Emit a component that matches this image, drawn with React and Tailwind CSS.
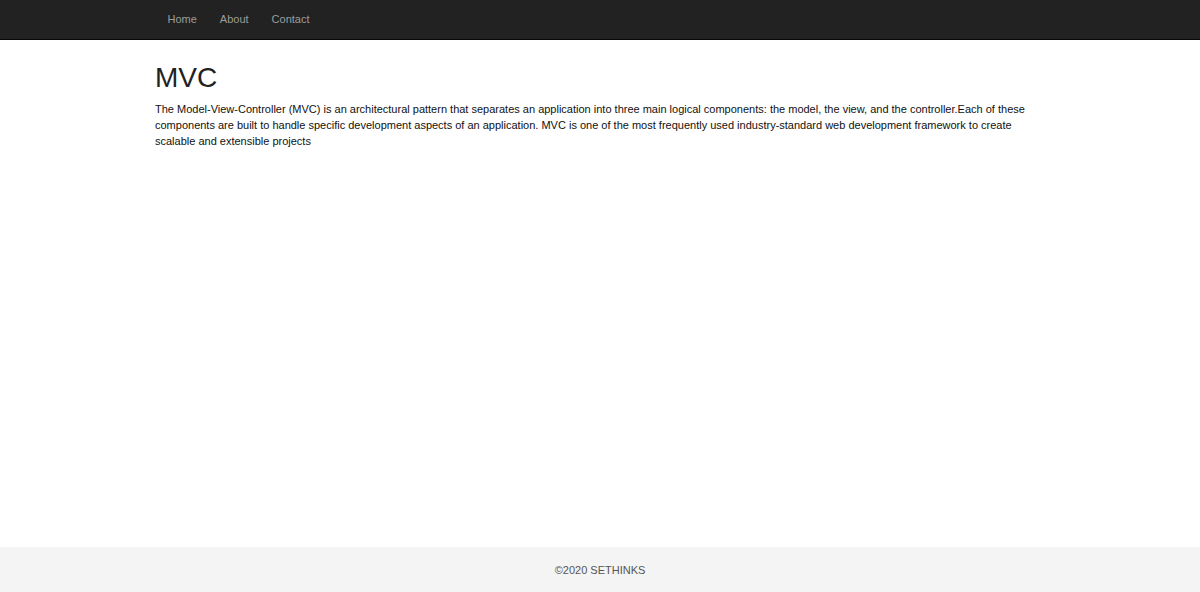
export default function App() {
  return (
    <div className="min-h-[592px] flex flex-col bg-white font-['Liberation_Sans',Arial,sans-serif]">
      {/* Navbar */}
      <nav className="h-10 bg-[#222222] border-b border-[#080808]">
        <ul className="w-[890px] mx-auto pl-px flex text-[11px] text-[#9d9d9d] leading-[39px]">
          <li className="px-[11.5px]">Home</li>
          <li className="px-[11.5px]">About</li>
          <li className="px-[11.5px]">Contact</li>
        </ul>
      </nav>

      {/* Content */}
      <main className="flex-1 w-[890px] mx-auto">
        <h1 className="mt-[22px] text-[28px] leading-8 text-[#222]">MVC</h1>
        <p className="mt-[7px] text-[11px] leading-4 text-[#111]">
          The Model-View-Controller (MVC) is an architectural pattern that separates an application into three main logical components: the model, the view, and the controller.Each of these components are built to handle specific development aspects of an application. MVC is one of the most frequently used industry-standard web development framework to create scalable and extensible projects
        </p>
      </main>

      {/* Footer */}
      <footer className="h-[45px] pt-px bg-[#f4f4f4] flex items-center justify-center text-[11px] text-[#555]">
        ©2020 SETHINKS
      </footer>
    </div>
  );
}
